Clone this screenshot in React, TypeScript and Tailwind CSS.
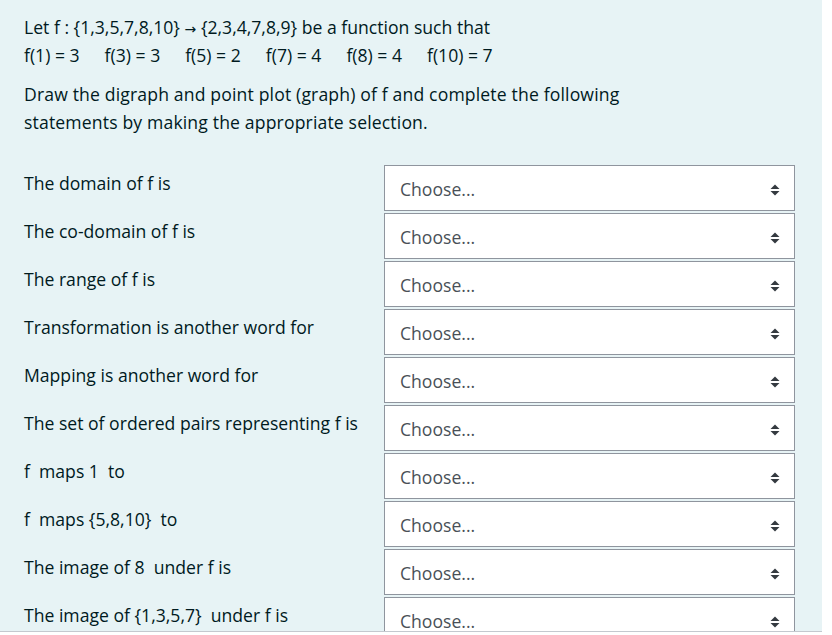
import React from "react";

const rows: React.ReactNode[] = [
  "The domain of f is",
  "The co-domain of f is",
  "The range of f is",
  "Transformation is another word for",
  "Mapping is another word for",
  "The set of ordered pairs representing f is",
  <>f&nbsp; maps 1&nbsp; to</>,
  <>f&nbsp; maps {"{5,8,10}"}&nbsp; to</>,
  <>The image of 8&nbsp; under f is</>,
  <>The image of {"{1,3,5,7}"}&nbsp; under f is</>,
];

const fs = ["f(1) = 3", "f(3) = 3", "f(5) = 2", "f(7) = 4", "f(8) = 4", "f(10) = 7"];

function Arrows() {
  return (
    <svg width="10" height="12" viewBox="0 0 10 12" className="block">
      <path d="M5 0.5 L9.5 5 L0.5 5 Z" fill="#343a40" />
      <path d="M5 11.5 L9.5 7 L0.5 7 Z" fill="#343a40" />
    </svg>
  );
}

export default function App() {
  return (
    <div
      className="w-[832px] h-[635px] overflow-hidden bg-white"
      style={{ fontFamily: '"Open Sans", "Noto Sans", sans-serif' }}
    >
      <div className="w-[822px] h-[632px] overflow-hidden bg-[#e7f3f5] border-b border-[#c4c9cf] text-[#001a1e] text-[17.6px] leading-[27.5px]">
        <div className="pl-[24px] pt-[14px]">
          <p className="h-[27.5px]">
            Let f : {"{1,3,5,7,8,10}"}{" "}
            <span style={{ fontFamily: '"DejaVu Sans", sans-serif' }} className="text-[14px] leading-none">→</span>{" "}
            {"{2,3,4,7,8,9}"} be a function such that
          </p>
          <p className="flex">
            {fs.map((t) => (
              <span key={t} className="w-[80.6px] shrink-0 whitespace-nowrap">{t}</span>
            ))}
          </p>
          <p className="mt-[12px] w-[660px] tracking-[0.15px]">
            Draw the digraph and point plot (graph) of f and complete the following statements by making the appropriate selection.
          </p>
          <div className="mt-[29px] flex flex-col">
            {rows.map((label, i) => (
              <div key={i} className="flex h-[48px]">
                <div className="w-[360px] pt-[5px]">{label}</div>
                <div className="w-[411px] h-[46px] bg-white border border-[#8f959e] flex items-center justify-between pl-[15px] pr-[14px] text-[#495057] pt-[3px]">
                  <span>Choose...</span>
                  <Arrows />
                </div>
              </div>
            ))}
          </div>
        </div>
      </div>
    </div>
  );
}
